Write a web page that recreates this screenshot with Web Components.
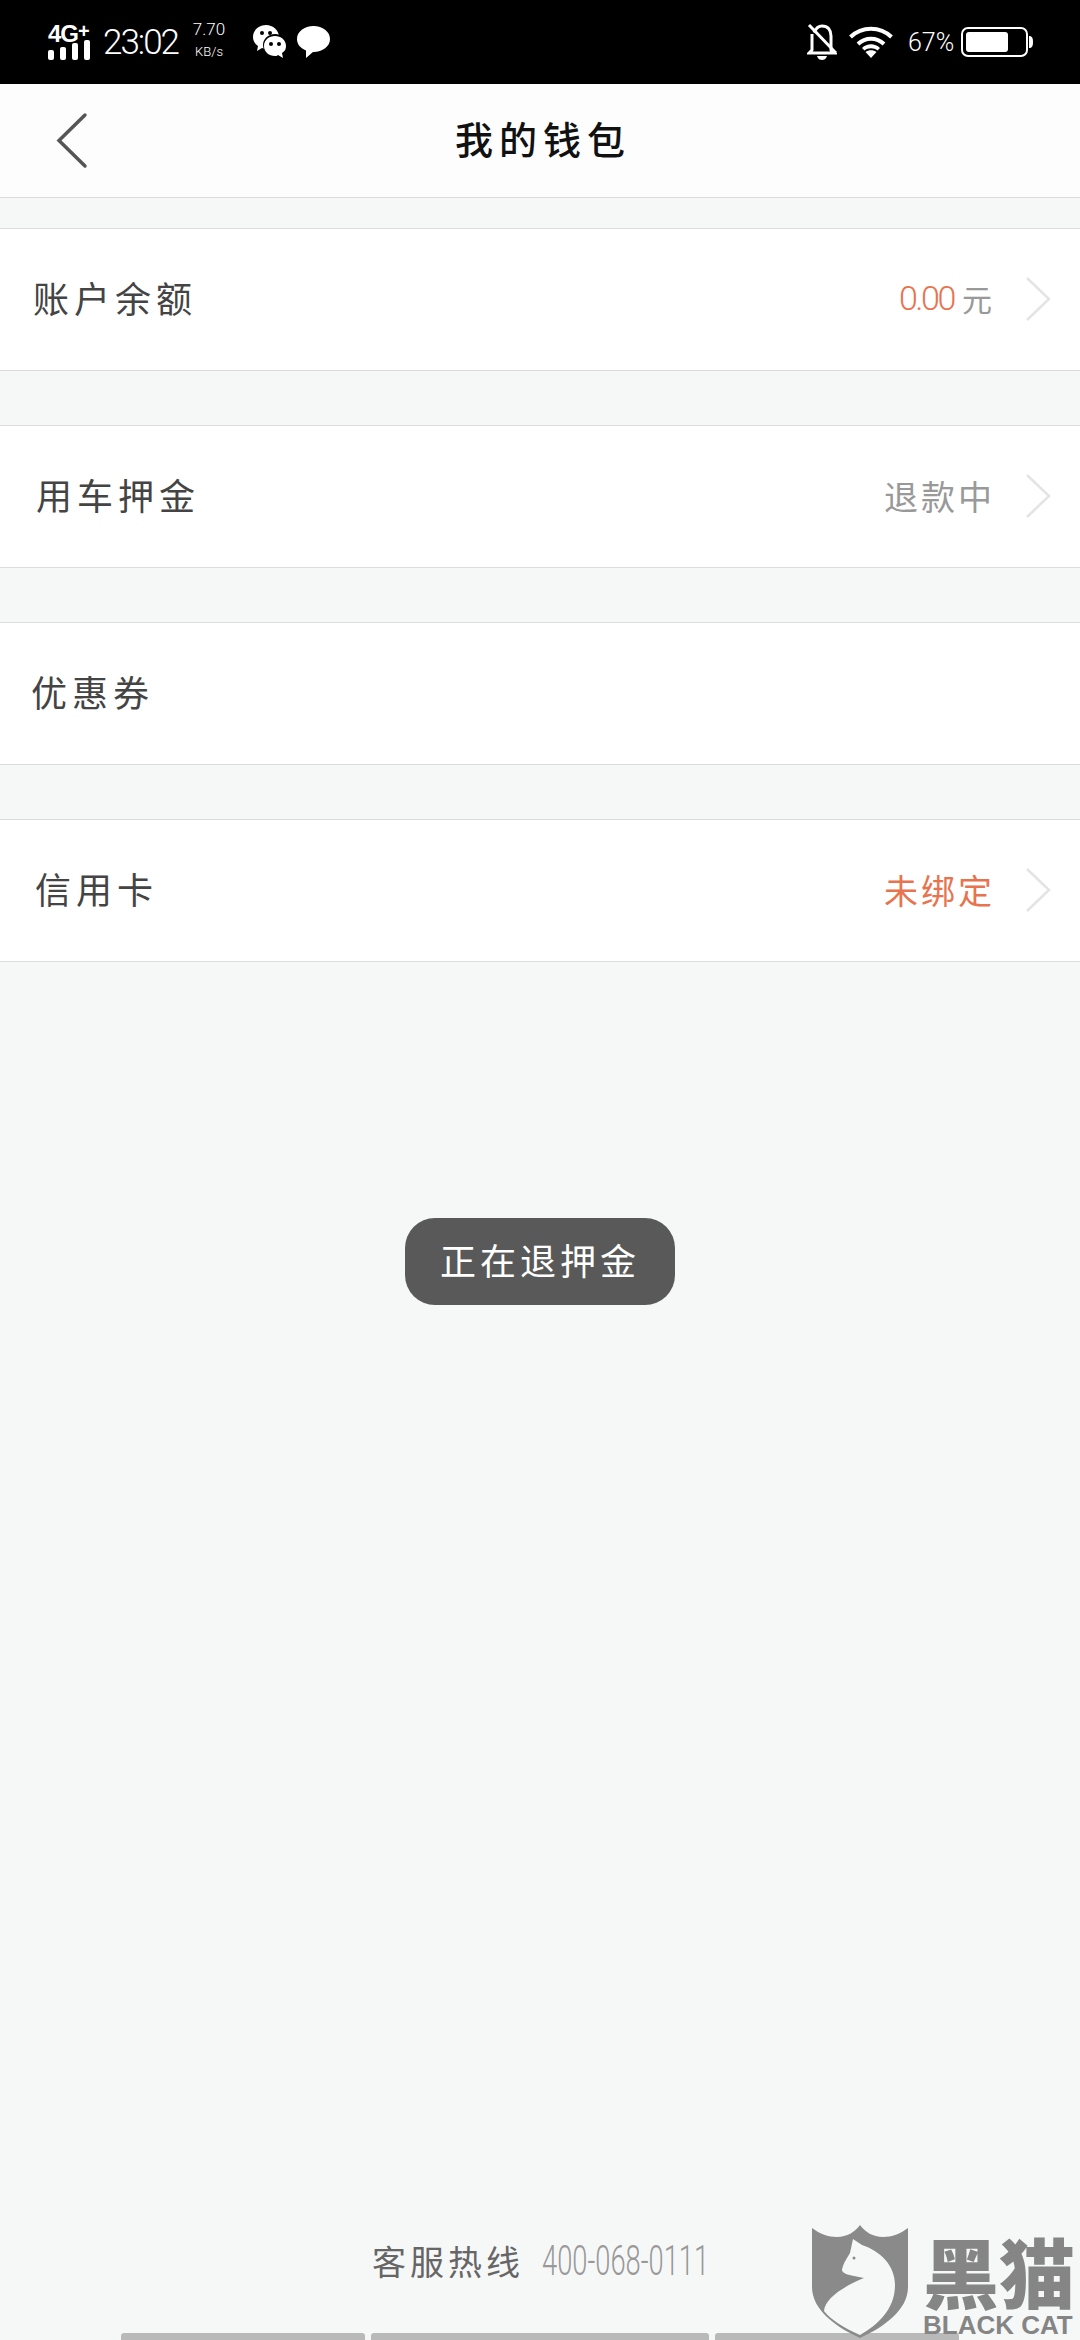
<!DOCTYPE html>
<html lang="zh-CN">
<head>
<meta charset="utf-8">
<title>我的钱包</title>
<style>
    html, body { margin: 0; padding: 0; background: #f6f8f8; }
    body { font-family: "Noto Sans CJK SC", "Noto Sans", sans-serif; }
</style>
</head>
<body>
<wallet-app>
    <status-bar></status-bar>
    <nav-header>我的钱包</nav-header>
    <wallet-row label="账户余额" nudge="0"><span slot="value" class="amount">0.00</span><span slot="value" class="unit">元</span></wallet-row>
    <wallet-row label="用车押金" nudge="3" tone="muted"><span slot="value">退款中</span></wallet-row>
    <wallet-row label="优惠券" nudge="-2" plain></wallet-row>
    <wallet-row label="信用卡" nudge="2" tone="accent"><span slot="value">未绑定</span></wallet-row>
    <toast-message>正在退押金</toast-message>
    <service-footer></service-footer>
    <home-bars></home-bars>
    <cat-watermark></cat-watermark>
</wallet-app>

<script>
class WalletApp extends HTMLElement {
    constructor() {
        super();
        this.attachShadow({ mode: 'open' });
        this.shadowRoot.innerHTML = `
        <style>
            :host {
                display: flex;
                flex-direction: column;
                position: relative;
                width: 1080px;
                height: 2340px;
                overflow: hidden;
                background: #f6f8f8;
            }
        </style>
        <slot></slot>
    `;
    }
}

class StatusBar extends HTMLElement {
    constructor() {
        super();
        this.attachShadow({ mode: 'open' });
        this.shadowRoot.innerHTML = `
        <style>
            :host {
                display: flex;
                align-items: center;
                justify-content: space-between;
                box-sizing: border-box;
                height: 84px;
                padding: 0 47px 0 48px;
                background: #000;
                color: #fff;
                font-family: "Roboto", sans-serif;
                font-weight: 300;
            }
            .side { display: flex; align-items: center; }
            .net { display: flex; flex-direction: column; width: 42px; padding-top: 0; }
            .net b { font: 700 24px/18px "Liberation Sans", sans-serif; letter-spacing: -1px; height: 15px; }
            .net b sup { font-size: 20px; line-height: 0; vertical-align: 4px; }
            .time { font-size: 35px; font-weight: 300; letter-spacing: -2px; margin-left: 13px; width: 77px; }
            .speed { display: flex; flex-direction: column; align-items: center; margin-left: 13px; width: 32px; padding-bottom: 7px; }
            .speed .n { font-size: 17px; line-height: 22px; font-weight: 300; }
            .speed .u { font-size: 13px; line-height: 14px; margin-top: 5px; font-weight: 300; }
            .pct { font-size: 25px; font-weight: 300; margin-left: 15px; width: 41px; }
            svg { display: block; }
        </style>
        <div class="side">
            <div class="net">
                <b>4G<sup>+</sup></b>
                <svg width="42" height="20" viewBox="0 0 42 20" fill="#fff">
                    <rect x="0" y="10" width="6" height="10" rx="2"/>
                    <rect x="12" y="7" width="6" height="13" rx="2"/>
                    <rect x="24" y="3" width="6" height="17" rx="2"/>
                    <rect x="36" y="0" width="6" height="20" rx="2"/>
                </svg>
            </div>
            <span class="time">23:02</span>
            <div class="speed"><span class="n">7.70</span><span class="u">KB/s</span></div>
            <svg style="margin-left:28px" width="34" height="34" viewBox="0 0 34 34">
                <path fill="#fff" d="M13 0C6 0 0 5 0 12c0 4 2 7 5 9l-1 5 5-3c1 0 3 1 4 1 7 0 13-5 13-12S20 0 13 0z"/>
                <path fill="#000" d="M22 9c-7 0-12 5-12 11s5 12 12 12c3 0 9 3 12 0V20c0-6-5-11-12-11z"/>
                <path fill="#fff" d="M22 11c-6 0-11 4-11 10s5 10 11 10c1 0 2 0 3-1l5 3-1-5c3-2 4-4 4-7 0-6-5-10-11-10z"/>
                <circle cx="9" cy="8" r="2" fill="#000"/><circle cx="17" cy="8" r="2" fill="#000"/>
                <circle cx="18" cy="19" r="2" fill="#000"/><circle cx="26" cy="19" r="2" fill="#000"/>
            </svg>
            <svg style="margin-left:10px" width="33" height="32" viewBox="0 0 33 32" fill="#fff">
                <path d="M16.5 0C7.4 0 0 5.6 0 13c0 5.4 3.6 9.4 9 11.400l0 7.600 7-6h.5C25.600 26 33 20.400 33 13S25.600 0 16.500 0z"/>
            </svg>
        </div>
        <div class="side">
            <svg width="30" height="36" viewBox="0 0 30 36" fill="none" stroke="#fff">
                <path stroke-width="3" d="M7 8.500C9 4 11.500 2 15 2c6 0 9 4 9 10v14l3.500 3H2l3-3V10"/>
                <path stroke-width="3" d="M2 1l27 28"/>
                <path fill="#fff" stroke="none" d="M10 32h10c-1 3-3 4-5 4s-4-1-5-4z"/>
            </svg>
            <svg style="margin-left:12px" width="44" height="32" viewBox="0 0 44 32" fill="none" stroke="#fff" stroke-width="4">
                <path d="M1.500 11C13 0 31 0 42.500 11"/>
                <path d="M9 18c7.500-7 18.500-7 26 0"/>
                <path fill="#fff" stroke="none" d="M13 22c5-5 13-5 18 0l-2.500 2.500c-3.500-3-9.500-3-13 0z"/>
                <path fill="#fff" stroke="none" d="M16.500 26c3-2.500 8-2.500 11 0L22 32z"/>
            </svg>
            <span class="pct">67%</span>
            <svg style="margin-left:12px" width="72" height="30" viewBox="0 0 72 30">
                <rect x="1" y="1" width="65" height="28" rx="6" fill="none" stroke="#fff" stroke-width="2"/>
                <rect x="5" y="5" width="42" height="20" rx="3" fill="#fff"/>
                <path fill="#fff" d="M68 9c3 0 4 2 4 6s-1 6-4 6z"/>
            </svg>
        </div>
    `;
    }
}

class NavHeader extends HTMLElement {
    constructor() {
        super();
        this.attachShadow({ mode: 'open' });
        this.shadowRoot.innerHTML = `
        <style>
            :host {
                display: flex;
                align-items: center;
                justify-content: center;
                position: relative;
                box-sizing: border-box;
                height: 114px;
                background: #fdfdfd;
                border-bottom: 1px solid #dcdcdc;
            }
            span { font-size: 38px; letter-spacing: 6px; margin-left: 6px; margin-bottom: 6px; color: #111; font-weight: 500; }
            svg { position: absolute; left: 56px; top: 28px; }
        </style>
        <svg width="32" height="57" viewBox="0 0 32 57" fill="none" stroke="#555" stroke-width="3.500" stroke-linecap="round">
            <path d="M29 3L3 28.500 29 54"/>
        </svg>
        <span><slot></slot></span>
    `;
    }
}

class WalletRow extends HTMLElement {
    constructor() {
        super();
        this.attachShadow({ mode: 'open' });
        this.shadowRoot.innerHTML = `
        <style>
            :host {
                display: flex;
                align-items: center;
                box-sizing: border-box;
                height: 143px;
                margin-top: 54px;
                padding: 0 29px 0 33px;
                background: #fff;
                border-top: 1px solid #dcdcdc;
                border-bottom: 1px solid #dcdcdc;
            }
            :host(:nth-of-type(1)) { margin-top: 30px; }
            .label { font-size: 36px; letter-spacing: 5px; color: #444; margin-bottom: 6px; }
            .value { margin-left: auto; margin-right: -3px; margin-bottom: 3px; display: flex; align-items: center; font-size: 34px; letter-spacing: 3px; color: #999; }
            :host([tone="accent"]) .value { color: #e8734f; }
            ::slotted(.amount) { color: #e8734f; font: 300 34px "Roboto", sans-serif; letter-spacing: -2.400px; margin-right: 8px; }
            ::slotted(.unit) { color: #999; font-size: 30px; }
            svg { display: block; margin-left: 33px; margin-bottom: 2px; }
            :host([plain]) svg, :host([plain]) .value { display: none; }
        </style>
        <span class="label"></span>
        <span class="value"><slot name="value"></slot></span>
        <svg width="26" height="46" viewBox="0 0 26 46" fill="none" stroke="#e4e4e4" stroke-width="2.500">
            <path d="M2 2l22 21L2 44"/>
        </svg>
    `;
    }

    connectedCallback() {
        const label = this.shadowRoot.querySelector('.label');
        label.textContent = this.getAttribute('label');
        if (this.hasAttribute('nudge')) {
            label.style.marginLeft = this.getAttribute('nudge') + 'px';
        }
    }
}

class ToastMessage extends HTMLElement {
    constructor() {
        super();
        this.attachShadow({ mode: 'open' });
        this.shadowRoot.innerHTML = `
        <style>
            :host {
                display: flex;
                align-items: center;
                justify-content: center;
                position: absolute;
                left: 405px;
                top: 1218px;
                box-sizing: border-box;
                width: 270px;
                height: 87px;
                padding-bottom: 5px;
                border-radius: 30px;
                background: #595959;
                color: #fff;
                font-size: 36px;
                letter-spacing: 4px;
            }
        </style>
        <slot></slot>
    `;
    }
}

class ServiceFooter extends HTMLElement {
    constructor() {
        super();
        this.attachShadow({ mode: 'open' });
        this.shadowRoot.innerHTML = `
        <style>
            :host {
                display: flex;
                align-items: center;
                justify-content: center;
                gap: 18px;
                margin-top: auto;
                margin-bottom: 41px;
                padding-right: 3px;
                height: 60px;
            }
            .tag { font-size: 34px; letter-spacing: 4px; color: #666; margin-bottom: 4px; }
            /* the digits in the reference are very narrow, hence scaleX */
            .tel {
                display: inline-block;
                width: 163px;
                white-space: nowrap;
                font: 300 42px "Roboto", sans-serif;
                color: #999;
                transform: scaleX(0.65);
                transform-origin: left center;
                margin-bottom: 4px;
            }
        </style>
        <span class="tag">客服热线</span>
        <span class="tel">400-068-0111</span>
    `;
    }
}

class HomeBars extends HTMLElement {
    constructor() {
        super();
        this.attachShadow({ mode: 'open' });
        this.shadowRoot.innerHTML = `
        <style>
            :host { display: flex; justify-content: center; gap: 6px; height: 7px; }
            i { display: block; height: 7px; background: #b9b9b9; border-radius: 3px 3px 0 0; }
        </style>
        <i style="width:244px"></i><i style="width:338px"></i><i style="width:244px"></i>
    `;
    }
}

class CatWatermark extends HTMLElement {
    constructor() {
        super();
        this.attachShadow({ mode: 'open' });
        this.shadowRoot.innerHTML = `
        <style>
            :host {
                display: flex;
                gap: 15px;
                position: absolute;
                left: 812px;
                top: 2225px;
                width: 268px;
                color: #858585;
            }
            svg { display: block; flex: none; }
            .words { display: flex; flex-direction: column; align-items: flex-start; padding-top: 3px; }
            .cn { font-size: 76px; line-height: 84px; font-weight: 900; white-space: nowrap; }
            .en { font: 700 26px/26px "Liberation Sans", sans-serif; white-space: nowrap; }
        </style>
        <svg width="96" height="114" viewBox="0 0 96 114">
            <path fill="#8a8a8a" d="M0 3C8 9 16 12 25 12 35 12 43 7 48 0 53 7 61 12 71 12 80 12 88 9 96 3V62C96 85 72 102 48 113 24 102 0 85 0 62z"/>
            <path fill="#f6f8f8" d="M41 14L50 20C68 26 83 40 83 60 83 84 66 100 48 110 32 103 18 94 12 86 13 74 30 62 52 53L42 51C36 50 30 48 30 45 31 38 36 32 38 28z"/>
            <circle cx="42" cy="33" r="1.500" fill="#8a8a8a"/>
        </svg>
        <div class="words">
            <span class="cn">黑猫</span>
            <span class="en">BLACK CAT</span>
        </div>
    `;
    }
}

customElements.define('wallet-app', WalletApp);
customElements.define('status-bar', StatusBar);
customElements.define('nav-header', NavHeader);
customElements.define('wallet-row', WalletRow);
customElements.define('toast-message', ToastMessage);
customElements.define('service-footer', ServiceFooter);
customElements.define('home-bars', HomeBars);
customElements.define('cat-watermark', CatWatermark);
</script>
</body>
</html>
